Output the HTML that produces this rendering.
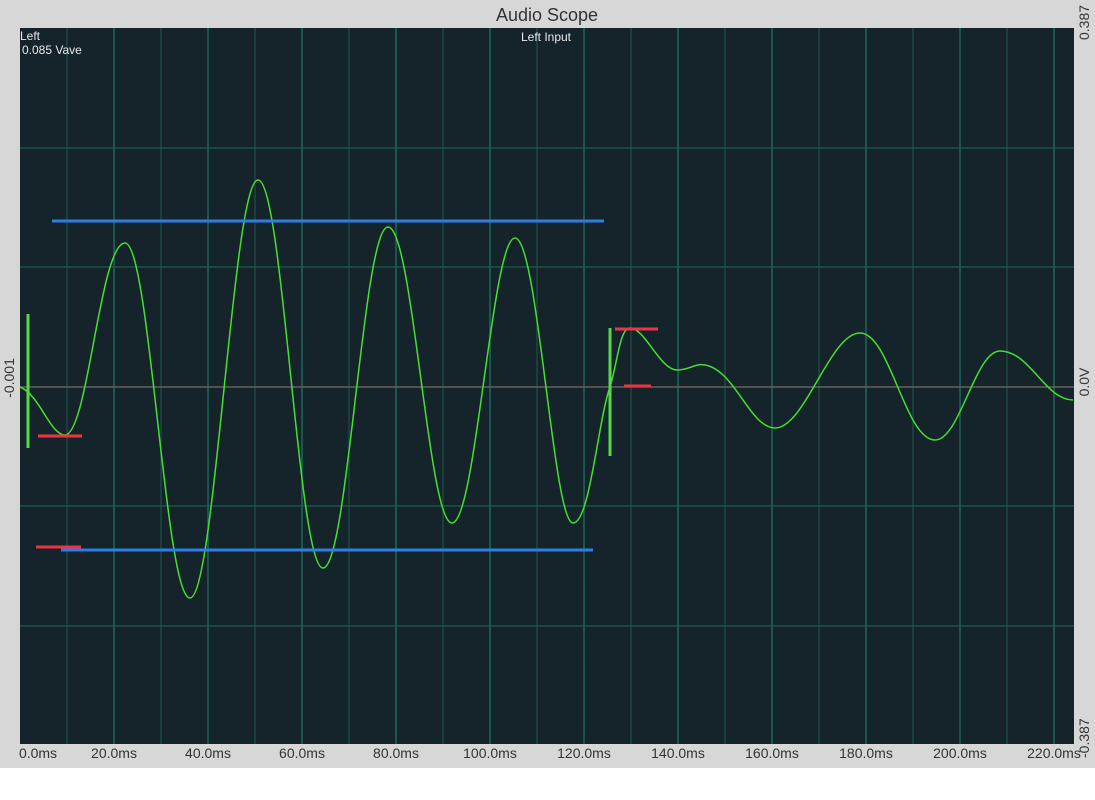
<!DOCTYPE html>
<html><head><style>
html,body{margin:0;padding:0;width:1095px;height:800px;background:#fff;overflow:hidden;font-family:"Liberation Sans",sans-serif}
</style></head><body>
<svg width="1095" height="800" xmlns="http://www.w3.org/2000/svg" style="position:absolute;left:0;top:0">
<rect x="0" y="0" width="1095" height="768" fill="#d6d7d6"/>
<rect x="20" y="28" width="1054" height="716" fill="#15242a"/>
<g stroke-width="1.2">
<line x1="67" y1="28" x2="67" y2="744" stroke="#1d4f48"/>
<line x1="114" y1="28" x2="114" y2="744" stroke="#1f7a68"/>
<line x1="161" y1="28" x2="161" y2="744" stroke="#1d4f48"/>
<line x1="208" y1="28" x2="208" y2="744" stroke="#1f7a68"/>
<line x1="255" y1="28" x2="255" y2="744" stroke="#1d4f48"/>
<line x1="302" y1="28" x2="302" y2="744" stroke="#1f7a68"/>
<line x1="349" y1="28" x2="349" y2="744" stroke="#1d4f48"/>
<line x1="396" y1="28" x2="396" y2="744" stroke="#1f7a68"/>
<line x1="443" y1="28" x2="443" y2="744" stroke="#1d4f48"/>
<line x1="490" y1="28" x2="490" y2="744" stroke="#1f7a68"/>
<line x1="537" y1="28" x2="537" y2="744" stroke="#1d4f48"/>
<line x1="584" y1="28" x2="584" y2="744" stroke="#1f7a68"/>
<line x1="631" y1="28" x2="631" y2="744" stroke="#1d4f48"/>
<line x1="678" y1="28" x2="678" y2="744" stroke="#1f7a68"/>
<line x1="725" y1="28" x2="725" y2="744" stroke="#1d4f48"/>
<line x1="772" y1="28" x2="772" y2="744" stroke="#1f7a68"/>
<line x1="819" y1="28" x2="819" y2="744" stroke="#1d4f48"/>
<line x1="866" y1="28" x2="866" y2="744" stroke="#1f7a68"/>
<line x1="913" y1="28" x2="913" y2="744" stroke="#1d4f48"/>
<line x1="960" y1="28" x2="960" y2="744" stroke="#1f7a68"/>
<line x1="1007" y1="28" x2="1007" y2="744" stroke="#1d4f48"/>
<line x1="1054" y1="28" x2="1054" y2="744" stroke="#1f7a68"/>
<line x1="20" y1="148" x2="1074" y2="148" stroke="#1d5a50"/>
<line x1="20" y1="267" x2="1074" y2="267" stroke="#1d5a50"/>
<line x1="20" y1="506" x2="1074" y2="506" stroke="#1d5a50"/>
<line x1="20" y1="626" x2="1074" y2="626" stroke="#1d5a50"/>
<line x1="20" y1="387" x2="1074" y2="387" stroke="#7a6a6a"/>
</g>
<path fill="none" stroke="#44e030" stroke-width="1.5" d="M20 387 C40 395 50 435 65 435 C88 435 100 243 125 243 C150 243 165 598 190 598 C215 598 233 180 258 180 C283 180 298 568 323 568 C348 568 363 227 388 227 C413 227 428 523 452 523 C476 523 492 238 515 238 C538 238 553 523 573 523 C590 523 598 420 610 387 C618 360 620 328 630 328 C645 328 660 370 677 370 C690 370 695 363 705 365 C735 370 750 428 775 428 C805 428 830 333 860 333 C890 333 905 440 935 440 C960 440 975 351 1000 351 C1030 351 1045 400 1073 400"/>
<g stroke-width="3">
<line x1="52" y1="221" x2="604" y2="221" stroke="#2a7ee6"/>
<line x1="61" y1="550" x2="593" y2="550" stroke="#2a7ee6"/>
<line x1="28" y1="314" x2="28" y2="448" stroke="#55d84a"/>
<line x1="610" y1="328" x2="610" y2="456" stroke="#55d84a"/>
<line x1="38" y1="436" x2="82" y2="436" stroke="#ee3344"/>
<line x1="36" y1="547" x2="81" y2="547" stroke="#ee3344"/>
<line x1="615" y1="329" x2="658" y2="329" stroke="#ee3344"/>
<line x1="624" y1="386" x2="651" y2="386" stroke="#ee3344"/>
</g>
<text x="547" y="21" font-size="18" fill="#333" text-anchor="middle">Audio Scope</text>
<text x="546" y="41" font-size="12" fill="#e8e8e8" text-anchor="middle">Left Input</text>
<text x="20" y="40" font-size="12" fill="#e8e8e8">Left</text>
<text x="22" y="54" font-size="12" fill="#e8e8e8">0.085 Vave</text>
<g font-size="14" fill="#333" text-anchor="middle">
<text x="38" y="758">0.0ms</text>
<text x="114" y="758">20.0ms</text>
<text x="208" y="758">40.0ms</text>
<text x="302" y="758">60.0ms</text>
<text x="396" y="758">80.0ms</text>
<text x="490" y="758">100.0ms</text>
<text x="584" y="758">120.0ms</text>
<text x="678" y="758">140.0ms</text>
<text x="772" y="758">160.0ms</text>
<text x="866" y="758">180.0ms</text>
<text x="960" y="758">200.0ms</text>
<text x="1054" y="758">220.0ms</text>
</g>
<g font-size="14" fill="#333">
<text transform="translate(1089,40) rotate(-90)" text-anchor="start">0.387</text>
<text transform="translate(1089,382) rotate(-90)" text-anchor="middle">0.0V</text>
<text transform="translate(1089,758) rotate(-90)" text-anchor="start">-0.387</text>
<text transform="translate(14,378) rotate(-90)" text-anchor="middle">-0.001</text>
</g>
</svg>
</body></html>
